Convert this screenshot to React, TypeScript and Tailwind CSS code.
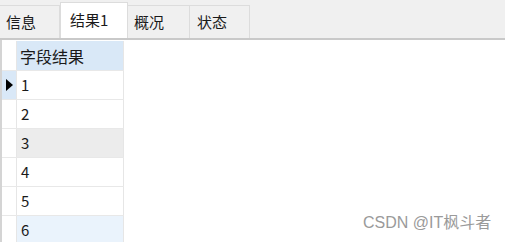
const rows = ["1", "2", "3", "4", "5", "6"];

function rowBg(i: number): string {
  if (i === 2) return "bg-[#ececec]";
  if (i === 5) return "bg-[#eaf3fc]";
  return "bg-white";
}

export default function App() {
  return (
    <div
      className="relative w-[505px] h-[242px] overflow-hidden bg-white text-[#1a1a1a]"
      style={{ fontFamily: '"Noto Sans CJK SC", "Noto Sans", sans-serif' }}
    >
      <div className="flex items-end h-[40px] bg-[#f0f0f0] border-b-2 border-[#c9c9c9] pr-[255px]">
        <div className="w-[60px] h-[33px] flex items-center pl-[6px] text-[15px] border-r border-t border-[#dcdcdc]">信息</div>
        <div className="w-[68px] h-[36px] flex items-center pl-[9px] text-[15px] bg-white border-x border-t border-[#dcdcdc]">结果1</div>
        <div className="w-[62px] h-[33px] flex items-center pl-[6px] text-[15px] border-r border-t border-[#dcdcdc]">概况</div>
        <div className="w-[60px] h-[33px] flex items-center pl-[7px] text-[15px] border-r border-t border-[#dcdcdc]">状态</div>
      </div>
      <div className="flex flex-col w-[124px] border-l-2 border-[#d4d4d4]">
        <div className="flex h-[29px] mt-[1px]">
          <div className="w-[15px] border-r border-[#e6e6e6]" />
          <div className="flex-1 flex items-center pl-[3px] text-[16px] bg-[#d9e8f7] border-r border-[#e6e6e6]">字段结果</div>
        </div>
        {rows.map((r, i) => (
          <div key={r} className="flex h-[29px] border-t border-[#e8e8e8]">
            <div className={`w-[15px] flex items-center justify-center border-r border-[#e6e6e6] ${i === 0 ? "bg-[#d9e8f7]" : "bg-white"}`}>
              {i === 0 && (
                <svg width="7" height="12" viewBox="0 0 7 12">
                  <path d="M0 0 L7 6 L0 12 Z" fill="#000" />
                </svg>
              )}
            </div>
            <div className={`flex-1 flex items-center pl-[4px] text-[15px] border-r border-[#e6e6e6] ${rowBg(i)}`}>{r}</div>
          </div>
        ))}
      </div>
      <div
        className="absolute left-[363px] top-[211px] text-[16px] text-[#9a9a9a]"
        style={{ fontFamily: '"Liberation Sans", "Noto Sans CJK SC", sans-serif' }}
      >
        CSDN @IT枫斗者
      </div>
    </div>
  );
}
